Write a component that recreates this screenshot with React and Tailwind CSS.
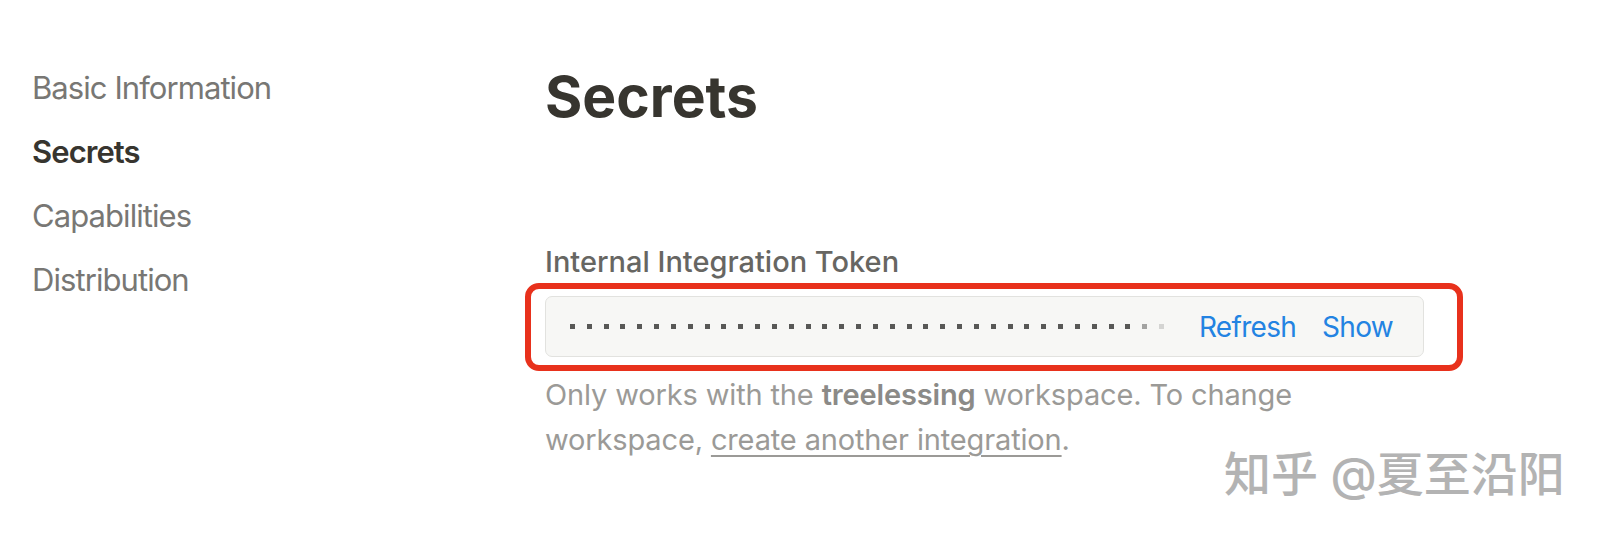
import React from "react";

const navItems = [
  { label: "Basic Information" },
  { label: "Secrets", active: true },
  { label: "Capabilities" },
  { label: "Distribution" },
];

function TokenDots() {
  const dots = Array.from({ length: 36 });
  return (
    <div className="flex items-center gap-[11.83px]">
      {dots.map((_, i) => (
        <span
          key={i}
          className={
            i === 35
              ? "w-[5px] h-[5px] bg-[#d4d4d2]"
              : i === 34
              ? "w-[5px] h-[5px] bg-[#a3a3a1]"
              : "w-[5px] h-[5px] bg-[#585856]"
          }
        />
      ))}
    </div>
  );
}

export default function App() {
  return (
    <div className="relative w-[1606px] h-[540px] bg-white overflow-hidden font-['Inter','Noto_Sans_CJK_SC',sans-serif]">
      <div className="flex">
        {/* left nav */}
        <nav className="w-[545px] pl-[32px] pt-[56px] shrink-0">
          {navItems.map((item) => (
            <div
              key={item.label}
              className={
                item.active
                  ? "text-[31px] leading-[64px] tracking-[-0.03em] font-semibold text-[#37352f]"
                  : "text-[31px] leading-[64px] tracking-[-0.03em] text-[#787774]"
              }
            >
              {item.label}
            </div>
          ))}
        </nav>

        {/* main */}
        <main className="w-[879px] pt-[63px]">
          <h1 className="text-[57px] leading-[1.2] font-bold text-[#37352f]">Secrets</h1>

          <div className="mt-[113px] text-[29px] leading-[36px] font-medium text-[#676662]">
            Internal Integration Token
          </div>

          <div className="relative mt-[16px]">
            <div className="h-[61px] flex items-center justify-between pl-[24px] pr-[30px] bg-[#f7f7f5] border border-[#e2e2df] rounded-[7px]">
              <TokenDots />
              <div className="flex items-center gap-[26px] text-[28px] tracking-[-0.025em] text-[#2383e2]">
                <span>Refresh</span>
                <span>Show</span>
              </div>
            </div>
            {/* annotation frame */}
            <div className="absolute -left-[20px] -top-[13px] -right-[39px] -bottom-[14px] border-[6px] border-[#e8311c] rounded-[14px] pointer-events-none" />
          </div>

          <p className="mt-[15px] text-[29px] leading-[45px] tracking-[-0.005em] text-[#9b9a97]">
            Only works with the <span className="font-semibold text-[#8b8a87]">treelessing</span> workspace. To change
            workspace, <span className="underline underline-offset-[5px] decoration-[1.5px]">create another integration</span>.
          </p>
        </main>
      </div>

      {/* watermark */}
      <div className="absolute left-[1224px] top-[444px] text-[47px] leading-[60px] font-medium text-[#b3b3b3] whitespace-nowrap">
        知乎 @夏至沿阳
      </div>
    </div>
  );
}
